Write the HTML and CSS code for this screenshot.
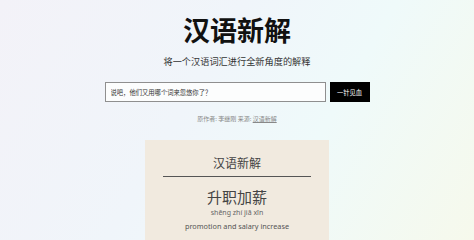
FILE: index.html
```html
<!DOCTYPE html>
<html lang="zh">
<head>
<meta charset="utf-8">
<title>汉语新解</title>
<link rel="stylesheet" href="styles.css">
</head>
<body>
<main class="page">
  <h1 class="title">汉语新解</h1>
  <p class="subtitle">将一个汉语词汇进行全新角度的解释</p>
  <form class="ask">
    <input class="ask-input" type="text" placeholder="说吧，他们又用哪个词来忽悠你了？">
    <button class="ask-btn" type="button">一针见血</button>
  </form>
  <p class="credit">原作者: 李继刚 来源: <a class="credit-link" href="#">汉语新解</a></p>
  <section class="card">
    <h2 class="card-title">汉语新解</h2>
    <div class="card-word">升职加薪</div>
    <div class="card-pinyin">shēng zhí jiā xīn</div>
    <div class="card-en">promotion and salary increase</div>
  </section>
</main>
</body>
</html>
```

FILE: styles.css
```css
html, body {
  margin: 0;
  padding: 0;
  height: 100%;
}
body {
  background: linear-gradient(120deg, #f3f2f8 0%, #f0f5fa 40%, #effafa 65%, #f6f9ec 100%);
  font-family: "Noto Sans", "Noto Sans CJK SC", sans-serif;
  color: #222;
  overflow: hidden;
}
.page {
  display: flex;
  flex-direction: column;
  align-items: center;
}
.title {
  margin: 15px 0 0;
  font-family: "Noto Sans CJK SC", sans-serif;
  font-size: 27px;
  line-height: 30px;
  font-weight: 700;
  color: #111;
}
.subtitle {
  margin: 10px 0 0;
  font-family: "Noto Sans CJK SC", sans-serif;
  font-size: 9.2px;
  line-height: 13px;
  color: #333;
}
.ask {
  margin: 14px 0 0;
  display: flex;
  gap: 4px;
  height: 20px;
}
.ask-input {
  box-sizing: border-box;
  width: 221px;
  height: 20px;
  margin: 0;
  padding: 0 5px;
  border: 1px solid #8f8f8f;
  background: #fcfdfd;
  font-family: "Noto Sans CJK SC", sans-serif;
  font-size: 6.3px;
  outline: none;
}
.ask-input::placeholder {
  color: #333;
}
.ask-btn {
  box-sizing: border-box;
  width: 40px;
  height: 20px;
  margin: 0;
  padding: 0;
  border: none;
  background: #000;
  color: #fff;
  font-family: "Noto Sans CJK SC", sans-serif;
  font-size: 6.3px;
}
.credit {
  margin: 13px 0 0;
  font-family: "Noto Sans CJK SC", sans-serif;
  font-size: 6px;
  line-height: 8px;
  color: #888;
}
.credit-link {
  color: #888;
  text-decoration: underline;
}
.card {
  box-sizing: border-box;
  margin-top: 17px;
  width: 184px;
  padding: 15px 18px 20px;
  background: #f1eadf;
  display: flex;
  flex-direction: column;
  align-items: center;
  text-align: center;
}
.card-title {
  align-self: stretch;
  margin: 0;
  padding-bottom: 5px;
  border-bottom: 1px solid #555;
  font-family: "Noto Sans CJK SC", sans-serif;
  font-size: 12px;
  line-height: 16px;
  font-weight: 400;
  color: #444;
}
.card-word {
  margin-top: 10px;
  font-family: "Noto Sans CJK SC", sans-serif;
  font-size: 15px;
  line-height: 20px;
  color: #444;
}
.card-pinyin {
  margin-top: 1px;
  font-size: 7px;
  line-height: 10px;
  color: #666;
}
.card-en {
  margin-top: 3px;
  font-size: 7.3px;
  line-height: 10px;
  color: #555;
}
```
